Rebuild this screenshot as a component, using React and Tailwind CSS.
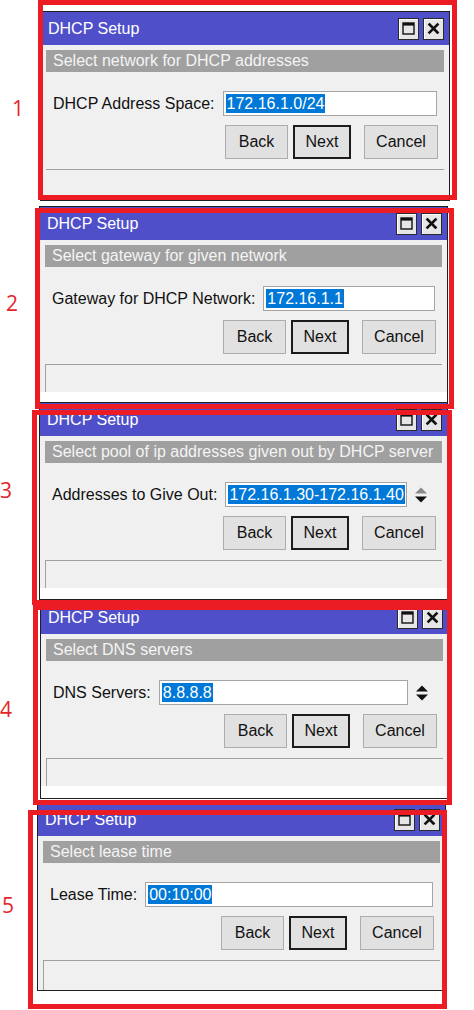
import React from "react";

const sections = [
  {
    n: "1",
    colCls: "w-[40px]",
    numCls: "pl-[12px] pt-[94px]",
    winCls: "mt-[11px] w-[410px]",
    subtitle: "Select network for DHCP addresses",
    label: "DHCP Address Space:",
    value: "172.16.1.0/24",
    spinner: null,
    statusCls: "h-[31px]",
    white: false,
  },
  {
    n: "2",
    colCls: "w-[39px]",
    numCls: "pl-[6px] pt-[88px]",
    winCls: "mt-[5px] w-[409px]",
    subtitle: "Select gateway for given network",
    label: "Gateway for DHCP Network:",
    value: "172.16.1.1",
    spinner: null,
    statusCls: "h-[28px] border-l",
    white: "h-[10px]",
  },
  {
    n: "3",
    colCls: "w-[39px]",
    numCls: "pl-[0px] pt-[73px]",
    winCls: "-mt-[1px] w-[409px]",
    subtitle: "Select pool of ip addresses given out by DHCP server",
    label: "Addresses to Give Out:",
    value: "172.16.1.30-172.16.1.40",
    spinner: "gray",
    statusCls: "h-[28px] border-l",
    white: "h-[11px]",
  },
  {
    n: "4",
    colCls: "w-[40px]",
    numCls: "pl-[0px] pt-[95px]",
    winCls: "mt-[0px] w-[409px]",
    subtitle: "Select DNS servers",
    label: "DNS Servers:",
    value: "8.8.8.8",
    spinner: "black",
    statusCls: "h-[28px] border-l",
    white: "h-[12px]",
  },
  {
    n: "5",
    colCls: "w-[37px]",
    numCls: "pl-[2px] pt-[92px]",
    winCls: "mt-[3px] w-[409px]",
    subtitle: "Select lease time",
    label: "Lease Time:",
    value: "00:10:00",
    spinner: null,
    statusCls: "h-[30px] border-l",
    white: false,
  },
];

const redRects = [
  "left-[38px] top-[0px] w-[419px] h-[200px]",
  "left-[35px] top-[208px] w-[419px] h-[201px]",
  "left-[32px] top-[410px] w-[420px] h-[195px]",
  "left-[33px] top-[605px] w-[419px] h-[200px]",
  "left-[28px] top-[810px] w-[419px] h-[199px]",
];

function TitleBtn({ children }) {
  return (
    <div className="w-[21px] h-[22px] border border-[#2a2a2a] bg-[#e6e6e6] flex items-center justify-center shadow-[inset_1px_1px_0_#ffffff]">
      {children}
    </div>
  );
}

function Spinner({ tone }) {
  const up = tone === "gray" ? "#8a8a8a" : "#111111";
  return (
    <div className="w-[28px] flex justify-center">
      <svg width="14" height="18" viewBox="0 0 14 18">
        <polygon points="1,7.5 7,1.5 13,7.5" fill={up} />
        <polygon points="1,10.5 13,10.5 7,16.5" fill="#111111" />
      </svg>
    </div>
  );
}

function Window({ s }) {
  return (
    <div className={`flex flex-col border border-[#1f1f1f] bg-[#f0f0f0] ${s.winCls}`}>
      <div className="h-[33px] bg-[#4f4fca] flex items-center justify-between pl-[7px] pr-[5px]">
        <span className="text-white text-[16px] leading-none">DHCP Setup</span>
        <div className="flex gap-[4px]">
          <TitleBtn>
            <svg width="13" height="13" viewBox="0 0 13 13">
              <rect x="1" y="1" width="11" height="11" fill="none" stroke="#111" strokeWidth="1.4" />
              <rect x="1" y="1" width="11" height="2.6" fill="#111" />
            </svg>
          </TitleBtn>
          <TitleBtn>
            <svg width="13" height="13" viewBox="0 0 13 13">
              <path d="M2.5 2.5 L10.5 10.5 M10.5 2.5 L2.5 10.5" stroke="#111" strokeWidth="2.6" strokeLinecap="square" />
            </svg>
          </TitleBtn>
        </div>
      </div>
      <div className="px-[5px] pt-[5px]">
        <div className="h-[22px] bg-[#a0a0a0] pl-[7px] text-[16px] leading-[22px] text-[#f4f4f4] whitespace-nowrap overflow-hidden">
          {s.subtitle}
        </div>
        <div className="mt-[19px] h-[25px] flex items-center pl-[7px] pr-[7px]">
          <span className="text-[16px] text-[#111] mr-[8px] whitespace-nowrap">{s.label}</span>
          <div className="flex-1 h-[25px] bg-white border border-[#a5a5a5] flex items-center pl-[2px] overflow-hidden">
            <span className="bg-[#0078d7] text-white text-[16px] leading-[19px] px-[1px] whitespace-nowrap">
              {s.value}
            </span>
          </div>
          {s.spinner && <Spinner tone={s.spinner} />}
        </div>
        <div className="mt-[9px] flex justify-end pr-[6px] text-[16px] text-[#111]">
          <div className="w-[63px] h-[34px] bg-[#e1e1e1] border border-[#adadad] flex items-center justify-center">
            Back
          </div>
          <div className="ml-[5px] w-[58px] h-[34px] bg-[#e1e1e1] border-2 border-[#1c1c1c] flex items-center justify-center">
            Next
          </div>
          <div className="ml-[13px] w-[74px] h-[34px] bg-[#e1e1e1] border border-[#adadad] flex items-center justify-center">
            Cancel
          </div>
        </div>
        <div className={`mt-[10px] border-t border-[#a0a0a0] ${s.statusCls}`} />
      </div>
      {s.white && <div className={`bg-white ${s.white}`} />}
    </div>
  );
}

export default function App() {
  return (
    <div className="relative w-[474px] h-[1010px] bg-white overflow-hidden font-['Liberation_Sans',Arial,sans-serif]">
      <div className="flex flex-col">
        {sections.map((s) => (
          <div key={s.n} className="flex items-start">
            <div className={`shrink-0 ${s.colCls} ${s.numCls}`}>
              <span className="block text-[21px] leading-[28px] text-[#e3262b] font-['Open_Sans',sans-serif]">
                {s.n}
              </span>
            </div>
            <Window s={s} />
          </div>
        ))}
      </div>
      {redRects.map((c, i) => (
        <div key={i} className={`absolute border-[5px] border-[#ec1c24] pointer-events-none ${c}`} />
      ))}
    </div>
  );
}
